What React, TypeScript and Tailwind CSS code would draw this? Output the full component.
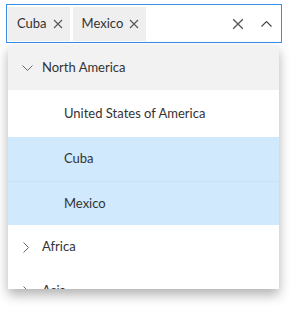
import { ReactNode } from "react";

const font = { fontFamily: "Lato, 'Open Sans', sans-serif" };

function SmallX({ size = 9 }: { size?: number }) {
  return (
    <svg width={size} height={size} viewBox="0 0 10 10" fill="none" stroke="#555" strokeWidth="1.1">
      <path d="M1 1L9 9M9 1L1 9" />
    </svg>
  );
}

function ChevronDown() {
  return (
    <svg width="11" height="6" viewBox="0 0 11 6" fill="none" stroke="#666" strokeWidth="1">
      <path d="M0.5 0.5L5.5 5.5L10.5 0.5" />
    </svg>
  );
}

function ChevronRight() {
  return (
    <svg width="6" height="11" viewBox="0 0 6 11" fill="none" stroke="#666" strokeWidth="1">
      <path d="M0.5 0.5L5.5 5.5L0.5 10.5" />
    </svg>
  );
}

function ChevronUp() {
  return (
    <svg width="11" height="6" viewBox="0 0 11 6" fill="none" stroke="#444" strokeWidth="1.1">
      <path d="M0.5 5.5L5.5 0.5L10.5 5.5" />
    </svg>
  );
}

function Tag({ label }: { label: string }) {
  return (
    <div className="flex h-[34px] items-center gap-[6px] bg-[#efefef] pl-[9px] pr-[7px] text-[13px] text-[#333]">
      <span>{label}</span>
      <SmallX size={10} />
    </div>
  );
}

function Row({
  children,
  height,
  tone = "white",
  divider = false
}: {
  children: ReactNode;
  height: string;
  tone?: "white" | "gray" | "blue";
  divider?: boolean;
}) {
  const bg = tone === "gray" ? "bg-[#f2f2f2]" : tone === "blue" ? "bg-[#d0e9fc]" : "bg-white";
  return (
    <div
      className={`flex shrink-0 items-center text-[13px] text-[#333] ${height} ${bg} ${
        divider ? "border-t border-[#c8e3f9]" : ""
      }`}
    >
      {children}
    </div>
  );
}

export default function App() {
  return (
    <div className="h-[310px] w-[290px] bg-white" style={font}>
      <div className="pl-[6px] pt-[4px]">
        <div className="flex h-[39px] w-[276px] items-center border border-[#3a8ee6] bg-white pl-[1px]">
          <div className="flex gap-[3px]">
            <Tag label="Cuba" />
            <Tag label="Mexico" />
          </div>
          <div className="ml-auto flex items-center gap-[17px] pr-[9px]">
            <SmallX size={12} />
            <ChevronUp />
          </div>
        </div>
      </div>

      <div className="ml-[8px] mt-[2px] flex h-[244px] w-[271px] flex-col overflow-hidden bg-white shadow-[0_6px_11px_rgba(0,0,0,0.3)]">
        <Row height="h-[45px]" tone="gray">
          <span className="ml-[14px] flex w-[20px]">
            <ChevronDown />
          </span>
          <span>North America</span>
        </Row>
        <Row height="h-[47px]">
          <span className="ml-[56px]">United States of America</span>
        </Row>
        <Row height="h-[44px]" tone="blue">
          <span className="ml-[56px]">Cuba</span>
        </Row>
        <Row height="h-[44px]" tone="blue" divider>
          <span className="ml-[56px]">Mexico</span>
        </Row>
        <Row height="h-[44px]">
          <span className="ml-[15px] flex w-[19px]">
            <ChevronRight />
          </span>
          <span>Africa</span>
        </Row>
        <Row height="h-[44px]">
          <span className="ml-[15px] flex w-[19px]">
            <ChevronRight />
          </span>
          <span>Asia</span>
        </Row>
      </div>
    </div>
  );
}
